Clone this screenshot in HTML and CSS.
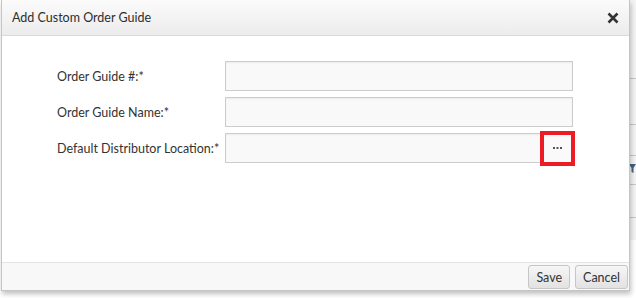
FILE: index.html
```html
<!DOCTYPE html>
<html lang="en">
<head>
  <meta charset="UTF-8"/>
  <title>Add Custom Order Guide</title>
  <link rel="stylesheet" href="styles.css">
</head>
<body>
  <!-- page behind the dialog -->
  <div class="backdrop">
    <div class="back-line l1"></div>
    <div class="back-line l2"></div>
    <div class="back-line l3"></div>
    <div class="back-line l4"></div>
    <div class="back-line l5"></div>
    <svg class="filter-icon" width="7" height="10" viewBox="0 0 7 10">
      <path d="M0 0h7L4.5 4v5L2.5 8V4z" fill="#47607e"/>
    </svg>
  </div>

  <div class="dialog">
    <div class="dialog-title">
      <span>Add Custom Order Guide</span>
      <button class="close" aria-label="Close">
        <svg width="12" height="12" viewBox="0 0 12 12">
          <path d="M1.5 1.5l9 9M10.5 1.5l-9 9" stroke="#333" stroke-width="2.6"/>
        </svg>
      </button>
    </div>

    <div class="dialog-body">
      <div class="form">
        <label class="lbl">Order Guide #:*</label>
        <input class="field" type="text">

        <label class="lbl">Order Guide Name:*</label>
        <input class="field" type="text">

        <label class="lbl">Default Distributor Location:*</label>
        <div class="picker">
          <input class="field" type="text">
          <button class="dots" aria-label="Browse">
            <svg width="9" height="3" viewBox="0 0 9 3">
              <rect x="0" y="0" width="2" height="2" fill="#555"/>
              <rect x="3.5" y="0" width="2" height="2" fill="#555"/>
              <rect x="7" y="0" width="2" height="2" fill="#555"/>
            </svg>
          </button>
        </div>
      </div>
    </div>

    <div class="dialog-footer">
      <button class="btn">Save</button>
      <button class="btn">Cancel</button>
    </div>
  </div>
</body>
</html>
```

FILE: styles.css
```css
body {
  margin: 0;
  width: 636px;
  height: 298px;
  overflow: hidden;
  background: #fff;
  font-family: Lato, "Noto Sans", sans-serif;
  font-size: 12.5px;
  color: #333;
  position: relative;
}
/* BACKGROUND PAGE STRIP */
.backdrop {
  position: absolute;
  top: 0;
  right: 0;
  width: 8px;
  height: 240px;
  background: #f4f4f4;
}
.back-line {
  position: absolute;
  left: 0;
  right: 0;
  height: 1px;
  background: #c8c8c8;
}
.l1 { top: 78px; }
.l2 { top: 124px; }
.l3 { top: 155px; }
.l4 { top: 184px; }
.l5 { top: 217px; }
.filter-icon {
  position: absolute;
  top: 164px;
  left: 1px;
}
/* DIALOG */
.dialog {
  position: absolute;
  top: 0;
  left: 1px;
  width: 627px;
  height: 290px;
  display: flex;
  flex-direction: column;
  background: #fff;
  border: 1px solid #c5c5c5;
  border-top: none;
  box-shadow: 1px 3px 5px rgba(0,0,0,0.25);
}
.dialog-title {
  height: 35px;
  flex: none;
  display: flex;
  align-items: center;
  justify-content: space-between;
  padding: 0 10px 0 10px;
  background: linear-gradient(#fbfbfb, #ececec);
  border-bottom: 1px solid #dadada;
  color: #2e2e2e;
}
.close {
  display: flex;
  border: none;
  background: transparent;
  padding: 0;
  cursor: pointer;
}
.dialog-body {
  flex: 1;
  padding: 25px 0 0 55px;
}
.form {
  display: grid;
  grid-template-columns: 168px 348px;
  row-gap: 6px;
  align-items: center;
}
.lbl {
  white-space: nowrap;
}
.field {
  box-sizing: border-box;
  width: 348px;
  height: 30px;
  margin: 0;
  border: 1px solid #ccc;
  background: #f9f9f9;
  box-shadow: inset 0 1px 2px rgba(0,0,0,0.06);
  font: inherit;
}
.picker {
  position: relative;
}
/* highlighted lookup button */
.dots {
  position: absolute;
  top: -2px;
  right: -2px;
  box-sizing: border-box;
  width: 35px;
  height: 35px;
  display: flex;
  align-items: center;
  justify-content: center;
  border: 4px solid #ed1c24;
  background: #fafafa;
  padding: 0;
  cursor: pointer;
}
.dialog-footer {
  height: 26px;
  flex: none;
  display: flex;
  justify-content: flex-end;
  align-items: flex-end;
  gap: 5px;
  padding: 0 1px 1px 0;
  background: #f8f8f8;
  border-top: 1px solid #e4e4e4;
}
.btn {
  height: 24px;
  padding: 0 7px;
  border: 1px solid #c6c6c6;
  border-radius: 3px;
  background: linear-gradient(#f6f6f6, #e2e2e2);
  font: inherit;
  color: #333;
  cursor: pointer;
}
```
